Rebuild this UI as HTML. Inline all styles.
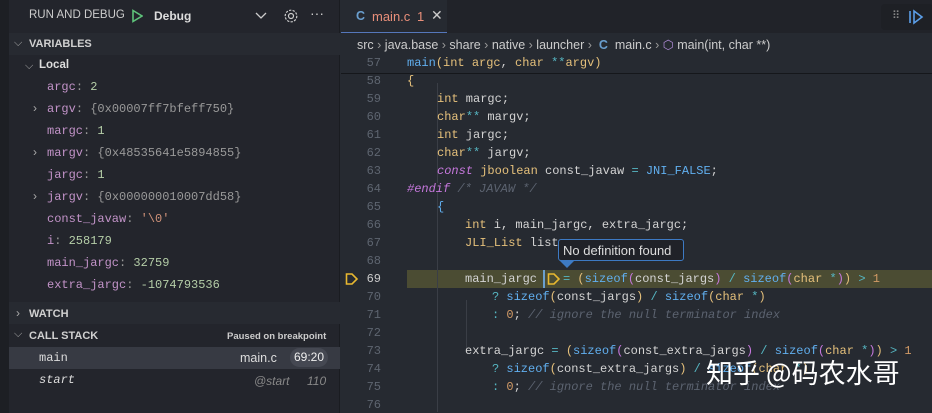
<!DOCTYPE html>
<html><head><meta charset="utf-8"><style>
*{margin:0;padding:0;box-sizing:border-box}
body{width:932px;height:413px;overflow:hidden;background:#262a31;font-family:"Liberation Sans","Noto Sans CJK SC",sans-serif;position:relative;color:#ccc}
.sb{position:absolute;left:0;top:0;width:340px;height:413px;background:#23252c;border-right:1px solid #1a1c21}
.edge{position:absolute;left:0;top:0;width:9px;height:413px;background:#1d1f24}
.abs{position:absolute;white-space:pre}
.mono{font-family:"Liberation Mono","DejaVu Sans Mono",monospace;font-size:12px}
.hdr{font-size:11px;font-weight:bold;color:#d0d0d0}
.vn{color:#c293c8}.vv{color:#b5cea8}.vs{color:#ce9178}.vg{color:#999}
.ed{position:absolute;left:341px;top:0;right:0;bottom:0}
.ln{position:absolute;left:0;width:40px;text-align:right;color:#5e6570}
.kw{color:#e5c07b}.fn{color:#61afef}.ty{color:#e5c07b}.op{color:#56b6c2}.cm{color:#5c6370;font-style:italic}.pp{color:#c678dd;font-style:italic}.pl{color:#d4d4d4}.num{color:#d19a66}.pu{color:#c678dd}
</style></head><body>
<div class="sb">
<div class="edge"></div>
<div class="abs" style="left:29px;top:9px;font-size:11.5px;color:#ccc">RUN AND DEBUG</div>
<svg class="abs" style="left:131px;top:9px" width="12" height="14"><path d="M2 1.5 L11 7 L2 12.5 Z" fill="none" stroke="#5ec27a" stroke-width="1.6"/></svg>
<div class="abs" style="left:154px;top:9px;font-size:12px;color:#ddd;font-weight:bold">Debug</div>
<svg class="abs" style="left:254px;top:10px" width="14" height="12"><path d="M2 3 L7 8 L12 3" fill="none" stroke="#ccc" stroke-width="1.3"/></svg>
<svg class="abs" style="left:283px;top:8px" width="16" height="16"><circle cx="8" cy="8" r="2.5" fill="none" stroke="#ccc" stroke-width="1.2"/><circle cx="8" cy="8" r="5.8" fill="none" stroke="#ccc" stroke-width="1.2" stroke-dasharray="2.3 1.3"/></svg>
<div class="abs" style="left:310px;top:5px;font-size:14px;color:#ccc">···</div>
<div class="abs" style="left:9px;top:33px;width:331px;height:22px;background:#272a31"></div>
<div class="abs" style="left:14px;top:37px;font-size:11px;color:#aaa">⌵</div>
<div class="abs hdr" style="left:29px;top:38px">VARIABLES</div>
<div class="abs" style="left:25px;top:60px;font-size:11px;color:#aaa">⌵</div>
<div class="abs" style="left:39px;top:59px;font-size:11.5px;font-weight:bold;color:#ddd">Local</div>
<div class="abs mono" style="left:47px;top:80px"><span class="vn">argc</span><span class="vg">: </span><span class="vv">2</span></div>
<div class="abs" style="left:33px;top:101px;color:#aaa;font-size:12px">›</div>
<div class="abs mono" style="left:47px;top:102px"><span class="vn">argv</span><span class="vg">: {0x00007ff7bfeff750}</span></div>
<div class="abs mono" style="left:47px;top:124px"><span class="vn">margc</span><span class="vg">: </span><span class="vv">1</span></div>
<div class="abs" style="left:33px;top:145px;color:#aaa;font-size:12px">›</div>
<div class="abs mono" style="left:47px;top:146px"><span class="vn">margv</span><span class="vg">: {0x48535641e5894855}</span></div>
<div class="abs mono" style="left:47px;top:168px"><span class="vn">jargc</span><span class="vg">: </span><span class="vv">1</span></div>
<div class="abs" style="left:33px;top:189px;color:#aaa;font-size:12px">›</div>
<div class="abs mono" style="left:47px;top:190px"><span class="vn">jargv</span><span class="vg">: {0x000000010007dd58}</span></div>
<div class="abs mono" style="left:47px;top:212px"><span class="vn">const_javaw</span><span class="vg">: </span><span class="vs">'\0'</span></div>
<div class="abs mono" style="left:47px;top:234px"><span class="vn">i</span><span class="vg">: </span><span class="vv">258179</span></div>
<div class="abs mono" style="left:47px;top:256px"><span class="vn">main_jargc</span><span class="vg">: </span><span class="vv">32759</span></div>
<div class="abs mono" style="left:47px;top:278px"><span class="vn">extra_jargc</span><span class="vg">: </span><span class="vv">-1074793536</span></div>
<div class="abs" style="left:9px;top:302px;width:331px;height:22px;background:#272a31"></div>
<div class="abs" style="left:16px;top:306px;font-size:12px;color:#aaa">›</div>
<div class="abs hdr" style="left:29px;top:308px">WATCH</div>
<div class="abs" style="left:14px;top:328px;font-size:11px;color:#aaa">⌵</div>
<div class="abs hdr" style="left:29px;top:330px">CALL STACK</div>
<div class="abs" style="left:227px;top:331px;font-size:9.5px;font-weight:bold;color:#ccc">Paused on breakpoint</div>
<div class="abs" style="left:9px;top:347px;width:331px;height:22px;background:#373a43"></div>
<div class="abs mono" style="left:39px;top:351px;color:#ddd">main</div>
<div class="abs" style="left:240px;top:351px;font-size:12.5px;color:#ddd">main.c</div>
<div class="abs" style="left:290px;top:348px;width:38px;height:19px;border-radius:10px;background:#454852;color:#eee;font-size:12px;text-align:center;line-height:19px">69:20</div>
<div class="abs mono" style="left:39px;top:373px;color:#ddd;font-style:italic">start</div>
<div class="abs" style="left:254px;top:374px;font-size:12px;color:#888;font-style:italic">@start</div>
<div class="abs" style="left:307px;top:374px;font-size:12px;color:#888;font-style:italic">110</div>
</div>

<div class="ed">
<div class="abs" style="left:0;top:0;width:591px;height:33px;background:#212329"></div>
<div class="abs" style="left:0;top:0;width:106px;height:33px;background:#262a31;border-bottom:1px solid #5577bb"></div>
<div class="abs" style="left:15px;top:9px;font-size:12.5px;color:#6a9fcf;font-weight:bold">C</div>
<div class="abs" style="left:31px;top:9px;font-size:13px;color:#e98f7a">main.c</div>
<div class="abs" style="left:76px;top:9px;font-size:13px;color:#e98f7a">1</div>
<div class="abs" style="left:90px;top:7px;font-size:14px;color:#ccc">✕</div>
<div class="abs" style="left:540px;top:4px;width:52px;height:26px;background:#1e2025;border-radius:4px"></div>
<div class="abs" style="left:551px;top:9px;font-size:11px;color:#888">⠿</div>
<svg class="abs" style="left:567px;top:9px" width="16" height="16"><path d="M2 2 V14" stroke="#5b9ee8" stroke-width="1.6"/><path d="M6 2 L14 8 L6 14 Z" fill="none" stroke="#5b9ee8" stroke-width="1.6"/></svg>
<div class="abs" style="left:16px;top:37px;font-size:12.5px;color:#ccc">src <span style="color:#999">›</span> java.base <span style="color:#999">›</span> share <span style="color:#999">›</span> native <span style="color:#999">›</span> launcher <span style="color:#999">›</span>  <b style="color:#6a9fcf">C</b>  main.c <span style="color:#999">›</span> <span style="color:#b18cd9">⬡</span> main(int, char **)</div>
<div class="abs" style="left:0;top:73px;width:591px;height:1px;background:#15171b"></div>
<div class="abs" style="left:66px;top:270px;width:525px;height:18px;background:#4b4c33"></div>
<div class="abs" style="left:96px;top:192px;width:1px;height:220px;background:#3a3e46"></div>
<div class="abs" style="left:125px;top:300px;width:1px;height:50px;background:#3a3e46"></div>
<div class="abs" style="left:96px;top:83px;width:1px;height:100px;background:#3a3e46"></div>
<div class="mono">
<div class="abs ln" style="top:56px">57</div><div class="abs" style="left:66px;top:56px"><span class="fn">main</span><span class="kw">(</span><span class="ty">int</span> <span class="kw">argc</span>, <span class="ty">char</span> <span class="op">**</span><span class="kw">argv</span><span class="kw">)</span></div>
<div class="abs ln" style="top:74px">58</div><div class="abs kw" style="left:66px;top:74px">{</div>
<div class="abs ln" style="top:92px">59</div><div class="abs pl" style="left:96px;top:92px"><span class="ty">int</span> margc;</div>
<div class="abs ln" style="top:110px">60</div><div class="abs pl" style="left:96px;top:110px"><span class="ty">char</span><span class="op">**</span> margv;</div>
<div class="abs ln" style="top:128px">61</div><div class="abs pl" style="left:96px;top:128px"><span class="ty">int</span> jargc;</div>
<div class="abs ln" style="top:146px">62</div><div class="abs pl" style="left:96px;top:146px"><span class="ty">char</span><span class="op">**</span> jargv;</div>
<div class="abs ln" style="top:164px">63</div><div class="abs pl" style="left:96px;top:164px"><span class="pu" style="font-style:italic">const</span> <span class="ty">jboolean</span> const_javaw <span class="op">=</span> <span class="fn">JNI_FALSE</span>;</div>
<div class="abs ln" style="top:182px">64</div><div class="abs" style="left:66px;top:182px"><span class="pp">#endif</span> <span class="cm">/* JAVAW */</span></div>
<div class="abs ln" style="top:200px">65</div><div class="abs fn" style="left:96px;top:200px">{</div>
<div class="abs ln" style="top:218px">66</div><div class="abs pl" style="left:124px;top:218px"><span class="ty">int</span> i, main_jargc, extra_jargc;</div>
<div class="abs ln" style="top:236px">67</div><div class="abs pl" style="left:124px;top:236px"><span class="ty">JLI_List</span> list</div>
<div class="abs ln" style="top:254px">68</div>
<div class="abs ln" style="top:272px;color:#ccc">69</div><div class="abs pl" style="left:124px;top:272px">main_jargc</div>
<div class="abs pl" style="left:222px;top:272px"><span class="op">=</span> <span class="kw">(</span><span class="fn">sizeof</span><span class="pu">(</span>const_jargs<span class="pu">)</span> <span class="op">/</span> <span class="fn">sizeof</span><span class="pu">(</span><span class="ty">char</span> <span class="op">*</span><span class="pu">)</span><span class="kw">)</span> <span class="op">&gt;</span> <span class="num">1</span></div>
<div class="abs ln" style="top:290px">70</div><div class="abs pl" style="left:151px;top:290px"><span class="op">?</span> <span class="fn">sizeof</span><span class="kw">(</span>const_jargs<span class="kw">)</span> <span class="op">/</span> <span class="fn">sizeof</span><span class="kw">(</span><span class="ty">char</span> <span class="op">*</span><span class="kw">)</span></div>
<div class="abs ln" style="top:308px">71</div><div class="abs pl" style="left:151px;top:308px"><span class="op">:</span> <span class="num">0</span>; <span class="cm">// ignore the null terminator index</span></div>
<div class="abs ln" style="top:326px">72</div>
<div class="abs ln" style="top:344px">73</div><div class="abs pl" style="left:124px;top:344px">extra_jargc <span class="op">=</span> <span class="kw">(</span><span class="fn">sizeof</span><span class="pu">(</span>const_extra_jargs<span class="pu">)</span> <span class="op">/</span> <span class="fn">sizeof</span><span class="pu">(</span><span class="ty">char</span> <span class="op">*</span><span class="pu">)</span><span class="kw">)</span> <span class="op">&gt;</span> <span class="num">1</span></div>
<div class="abs ln" style="top:362px">74</div><div class="abs pl" style="left:151px;top:362px"><span class="op">?</span> <span class="fn">sizeof</span><span class="kw">(</span>const_extra_jargs<span class="kw">)</span> <span class="op">/</span> <span class="fn">sizeof</span><span class="kw">(</span><span class="ty">char</span> <span class="op">*</span><span class="kw">)</span></div>
<div class="abs ln" style="top:380px">75</div><div class="abs pl" style="left:151px;top:380px"><span class="op">:</span> <span class="num">0</span>; <span class="cm">// ignore the null terminator index</span></div>
<div class="abs ln" style="top:398px">76</div>
</div>
<svg class="abs" style="left:4px;top:272px" width="14" height="14"><path d="M1.5 2 H7 L12 7 L7 12 H1.5 Z" fill="none" stroke="#e8b830" stroke-width="1.6"/></svg>
<div class="abs" style="left:202px;top:270px;width:2px;height:18px;background:#6a9fcf"></div>
<svg class="abs" style="left:206px;top:272px" width="14" height="14"><path d="M1.5 2 H7 L12 7 L7 12 H1.5 Z" fill="none" stroke="#e8b830" stroke-width="1.6"/></svg>
<div class="abs" style="left:217px;top:239px;width:126px;height:22px;background:#202228;border:1px solid #3d7ac4;border-radius:3px;font-size:13px;color:#ddd;padding:3px 0 0 4px">No definition found</div>
<svg class="abs" style="left:218px;top:260px" width="16" height="9"><path d="M0 0 H16 L8 8 Z" fill="#3d7ac4"/></svg>
<div class="abs" style="left:365px;top:352px;font-size:27px;color:#fff;font-family:'Noto Sans CJK SC',sans-serif">知乎 @码农水哥</div>
</div>
</body></html>
